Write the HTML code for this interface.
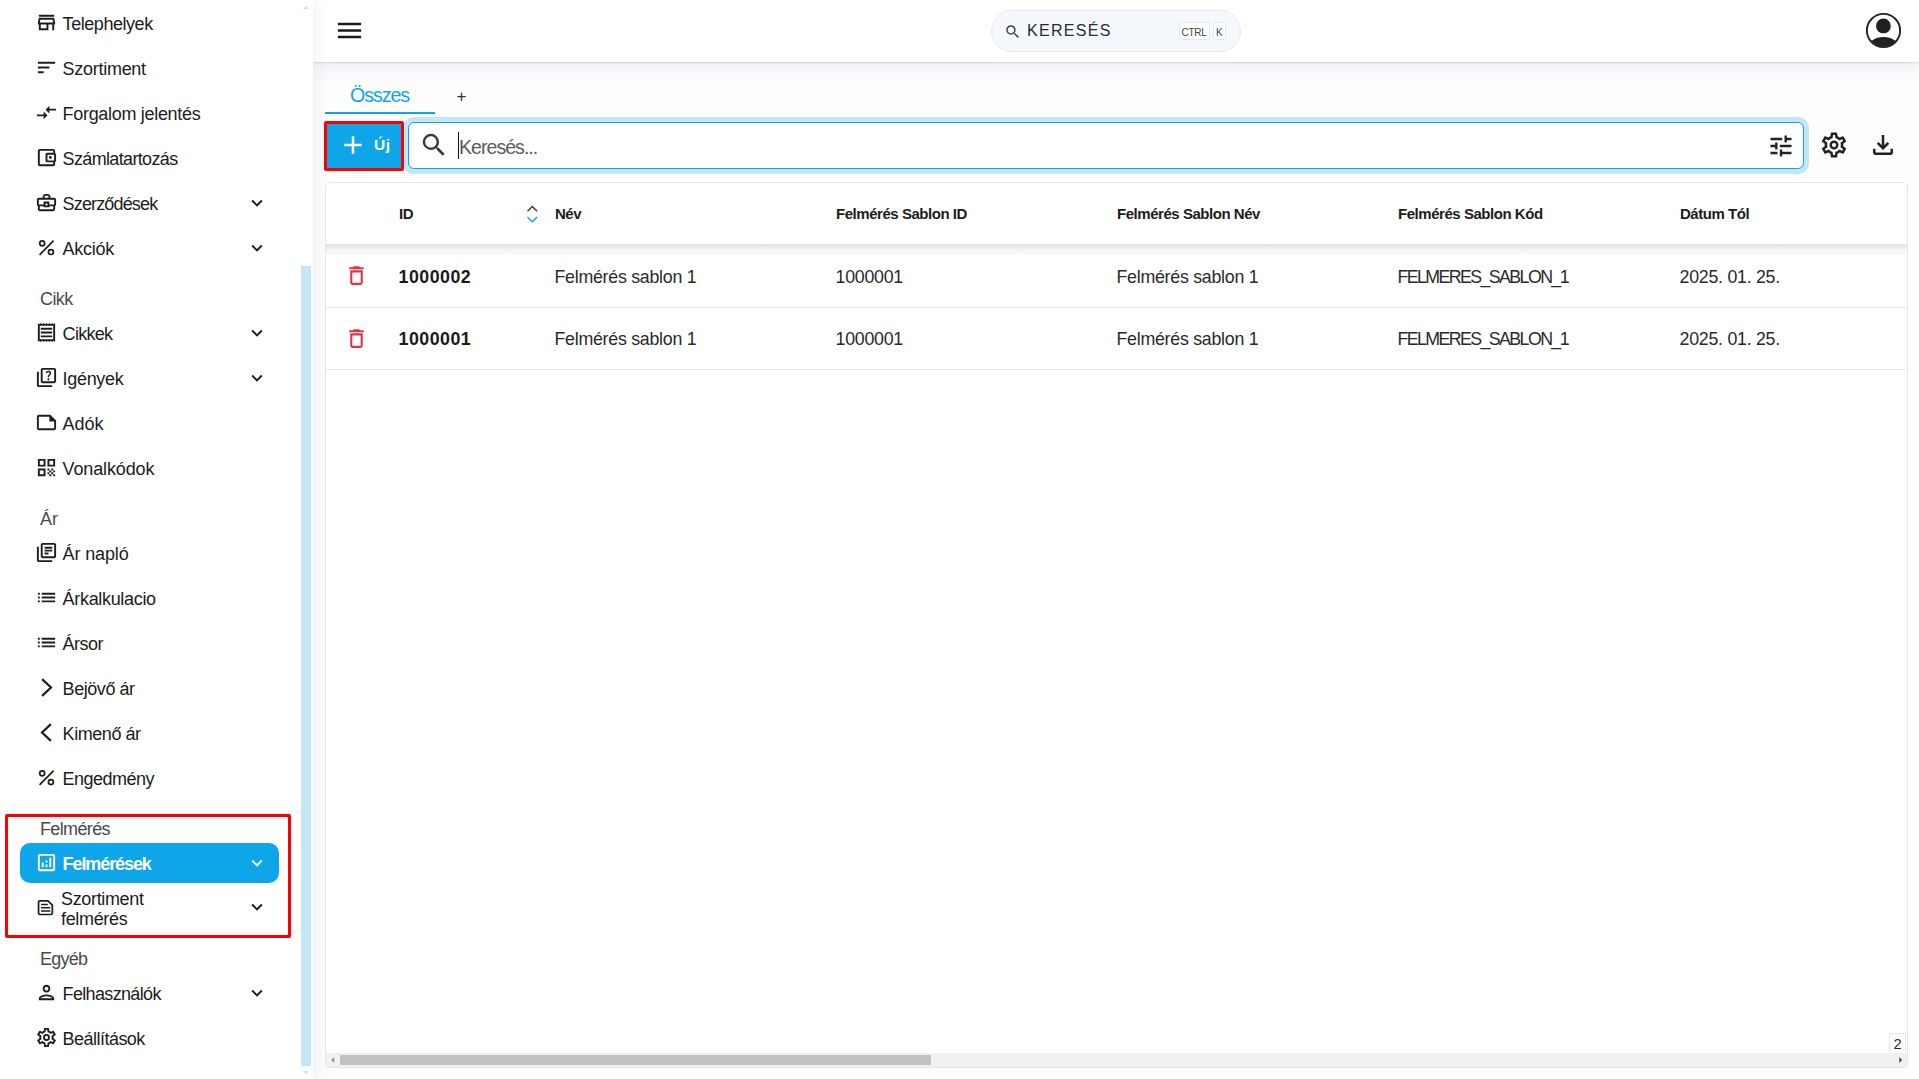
<!DOCTYPE html>
<html lang="hu">
<head>
<meta charset="utf-8">
<title>Felmérések</title>
<style>
*{box-sizing:border-box;margin:0;padding:0}
html,body{width:1919px;height:1079px;overflow:hidden;background:#fdfdfe;font-family:"Liberation Sans",sans-serif;color:#1f1f1f}
.abs{position:absolute}
svg{display:block;position:absolute;overflow:visible}
#side{position:absolute;left:0;top:0;width:313px;height:1079px;background:#fff;box-shadow:3px 0 14px rgba(70,90,140,.085);z-index:5;color:#1e1e1e}
.it{position:absolute;left:62.6px;font-size:18px;line-height:22px;white-space:nowrap;color:#1c1c1c}
.sec{position:absolute;left:40px;font-size:18px;line-height:22px;color:#4a4a4a}
#head{position:absolute;left:313px;top:0;width:1606px;height:62px;background:#fff;box-shadow:0 1px 1.5px rgba(90,105,130,.20),0 6px 16px rgba(90,110,150,.10);z-index:3}
#card{position:absolute;left:325px;top:182px;width:1583px;height:886px;background:#fff;border:1px solid #e3e6ea;border-radius:5px;overflow:hidden}
#thead{position:absolute;left:0;top:0;width:100%;height:61px;background:#fff;z-index:2}
#tshadow{position:absolute;left:0;top:61px;width:100%;height:13px;background:linear-gradient(to bottom,rgba(20,30,40,.125),rgba(20,30,40,.05) 45%,rgba(20,30,40,0));z-index:2}
.th{position:absolute;top:22px;font-size:15px;font-weight:bold;line-height:18px;color:#1c1c1c;white-space:nowrap;letter-spacing:-.46px}
.td{position:absolute;font-size:17.8px;margin-left:.5px;letter-spacing:-.26px;line-height:22px;color:#2a2a2a;white-space:nowrap}
.idc{font-weight:bold;color:#1a1a1a;letter-spacing:.5px}
.code{letter-spacing:-1.6px}
.rowline{position:absolute;left:0;width:100%;height:1px;background:#e4e6e9}
</style>
</head>
<body>

<!-- ============ SIDEBAR ============ -->
<div id="side">
  <div class="it" style="top:13px;letter-spacing:-0.45px">Telephelyek</div>
  <svg style="left:34.8px;top:10.8px" width="23" height="23" viewBox="0 0 24 24" fill="currentColor"><path d="M18.36 9L18.96 12H5.04L5.64 9H18.36M20 4H4V6H20V4M20 7H4L3 12V14H4V20H14V14H18V20H20V14H21V12L20 7M6 18V14H12V18H6Z"/></svg>
  <div class="it" style="top:58px;letter-spacing:-0.28px">Szortiment</div>
  <svg style="left:34.8px;top:55.8px" width="23" height="23" viewBox="0 0 24 24" fill="currentColor"><path d="M3,13H15V11H3M3,6V8H21V6M3,18H9V16H3V18Z"/></svg>
  <div class="it" style="top:103px;letter-spacing:-0.31px">Forgalom jelentés</div>
  <svg style="left:34.8px;top:100.8px" width="23" height="23" viewBox="0 0 24 24" fill="currentColor"><path d="M9.01 14H2v2h7.01v3L13 15l-3.99-4v3zm5.98-1v-3H22V8h-7.01V5L11 9l3.99 4z"/></svg>
  <div class="it" style="top:148px;letter-spacing:-0.65px">Számlatartozás</div>
  <svg style="left:34.8px;top:145.8px" width="23" height="23" viewBox="0 0 24 24" fill="currentColor"><path d="M5,3C3.89,3 3,3.9 3,5V19A2,2 0 0,0 5,21H19A2,2 0 0,0 21,19V16.72C21.59,16.37 22,15.74 22,15V9C22,8.26 21.59,7.63 21,7.28V5A2,2 0 0,0 19,3H5M5,5H19V7H13A2,2 0 0,0 11,9V15A2,2 0 0,0 13,17H19V19H5V5M13,9H20V15H13V9M16,10.5A1.5,1.5 0 0,0 14.5,12A1.5,1.5 0 0,0 16,13.5A1.5,1.5 0 0,0 17.5,12A1.5,1.5 0 0,0 16,10.5Z"/></svg>
  <div class="it" style="top:193px;letter-spacing:-0.85px">Szerződések</div>
  <svg style="left:34.8px;top:190.8px" width="23" height="23" viewBox="0 0 24 24" fill="currentColor"><path d="M20 7h-4V5l-2-2h-4L8 5v2H4c-1.1 0-2 .9-2 2v5c0 .75.4 1.38 1 1.730V19c0 1.110.89 2 2 2h14c1.110 0 2-.89 2-2v-3.280c.59-.35 1-.99 1-1.720V9c0-1.100-.9-2-2-2zM10 5h4v2h-4V5zM4 9h16v5h-5v-3H9v3H4V9zm9 6h-2v-2h2v2zm6 4H5v-3h4v1h6v-1h4v3z"/></svg>
  <svg style="left:245.9px;top:191.6px" width="22" height="22" viewBox="0 0 24 24" fill="currentColor"><path d="M7.41,8.58L12,13.17L16.59,8.58L18,10L12,16L6,10L7.41,8.58Z"/></svg>
  <div class="it" style="top:238px;letter-spacing:-0.25px">Akciók</div>
  <svg style="left:34.8px;top:235.8px" width="23" height="23" viewBox="0 0 24 24" fill="currentColor"><g fill="none" stroke="currentColor" stroke-width="1.8"><circle cx="7.5" cy="7.6" r="2.6"/><circle cx="16.6" cy="16.7" r="2.6"/><path d="M4.8 19.6L19.4 4.8"/></g></svg>
  <svg style="left:245.9px;top:236.6px" width="22" height="22" viewBox="0 0 24 24" fill="currentColor"><path d="M7.41,8.58L12,13.17L16.59,8.58L18,10L12,16L6,10L7.41,8.58Z"/></svg>
  <div class="sec" style="top:288px;letter-spacing:-0.58px">Cikk</div>
  <div class="it" style="top:323px;letter-spacing:-0.7px">Cikkek</div>
  <svg style="left:34.8px;top:320.8px" width="23" height="23" viewBox="0 0 24 24" fill="currentColor"><path d="M19.5 3.5L18 2l-1.5 1.5L15 2l-1.5 1.5L12 2l-1.5 1.5L9 2 7.5 3.5 6 2 4.5 3.5 3 2v20l1.5-1.5L6 22l1.5-1.5L9 22l1.5-1.5L12 22l1.5-1.5L15 22l1.5-1.5L18 22l1.5-1.5L21 22V2l-1.5 1.5zM19 19.090H5V4.910h14v14.180zM6 15h12v2H6zm0-4h12v2H6zm0-4h12v2H6z"/></svg>
  <svg style="left:245.9px;top:321.6px" width="22" height="22" viewBox="0 0 24 24" fill="currentColor"><path d="M7.41,8.58L12,13.17L16.59,8.58L18,10L12,16L6,10L7.41,8.58Z"/></svg>
  <div class="it" style="top:368px;letter-spacing:-0.33px">Igények</div>
  <svg style="left:34.8px;top:365.8px" width="23" height="23" viewBox="0 0 24 24" fill="currentColor"><path d="M4 6H2V20C2 21.1 2.9 22 4 22H18V20H4V6M20 2H8C6.9 2 6 2.9 6 4V16C6 17.1 6.9 18 8 18H20C21.1 18 22 17.1 22 16V4C22 2.9 21.1 2 20 2M20 16H8V4H20V16M13.51 10.16C13.92 9.43 14.69 9 15.14 8.36C15.62 7.69 15.35 6.42 14 6.42C13.12 6.42 12.68 7.09 12.5 7.65L11.13 7.08C11.51 5.96 12.52 5 14 5C15.23 5 16.08 5.56 16.5 6.26C16.87 6.86 17.08 7.97 16.5 8.82C15.87 9.75 15.27 10.03 14.94 10.63C14.81 10.87 14.76 11.03 14.76 11.81H13.24C13.24 11.4 13.18 10.73 13.51 10.16M12.95 13.95C12.95 13.36 13.42 12.91 14 12.91C14.59 12.91 15.04 13.36 15.04 13.95C15.04 14.53 14.6 15 14 15C13.42 15 12.95 14.53 12.95 13.95Z"/></svg>
  <svg style="left:245.9px;top:366.6px" width="22" height="22" viewBox="0 0 24 24" fill="currentColor"><path d="M7.41,8.58L12,13.17L16.59,8.58L18,10L12,16L6,10L7.41,8.58Z"/></svg>
  <div class="it" style="top:413px">Adók</div>
  <svg style="left:34.8px;top:410.8px" width="23" height="23" viewBox="0 0 24 24" fill="currentColor"><path d="M16 4H4c-1.1 0-2 .9-2 2v12.010c0 1.100.9 1.990 2 1.990h16c1.100 0 2-.9 2-2v-8l-6-6zM4 18.010V6h11v5h5v7.010H4z"/></svg>
  <div class="it" style="top:458px;letter-spacing:-0.14px">Vonalkódok</div>
  <svg style="left:34.8px;top:455.8px" width="23" height="23" viewBox="0 0 24 24" fill="currentColor"><path d="M3 11h8V3H3v8zm2-6h4v4H5V5zM3 21h8v-8H3v8zm2-6h4v4H5v-4zM13 3v8h8V3h-8zm6 6h-4V5h4v4zM19 19h2v2h-2zM13 13h2v2h-2zM15 15h2v2h-2zM13 17h2v2h-2zM15 19h2v2h-2zM17 17h2v2h-2zM17 13h2v2h-2zM19 15h2v2h-2z"/></svg>
  <div class="sec" style="top:508px">Ár</div>
  <div class="it" style="top:543px;letter-spacing:-0.14px">Ár napló</div>
  <svg style="left:34.8px;top:540.8px" width="23" height="23" viewBox="0 0 24 24" fill="currentColor"><path d="M4 6H2v14c0 1.100.9 2 2 2h14v-2H4V6zm16-4H8c-1.100 0-2 .9-2 2v12c0 1.100.9 2 2 2h12c1.100 0 2-.9 2-2V4c0-1.100-.9-2-2-2zm0 14H8V4h12v12zM10 9h8v2h-8zm0 3h4v2h-4zm0-6h8v2h-8z"/></svg>
  <div class="it" style="top:588px;letter-spacing:-0.32px">Árkalkulacio</div>
  <svg style="left:34.8px;top:585.8px" width="23" height="23" viewBox="0 0 24 24" fill="currentColor"><path d="M3 13h2v-2H3v2zm0 4h2v-2H3v2zm0-8h2V7H3v2zm4 4h14v-2H7v2zm0 4h14v-2H7v2zM7 7v2h14V7H7z"/></svg>
  <div class="it" style="top:633px;letter-spacing:-0.5px">Ársor</div>
  <svg style="left:34.8px;top:630.8px" width="23" height="23" viewBox="0 0 24 24" fill="currentColor"><path d="M3 13h2v-2H3v2zm0 4h2v-2H3v2zm0-8h2V7H3v2zm4 4h14v-2H7v2zm0 4h14v-2H7v2zM7 7v2h14V7H7z"/></svg>
  <div class="it" style="top:678px;letter-spacing:-0.44px">Bejövő ár</div>
  <svg style="left:34.8px;top:675.8px" width="23" height="23" viewBox="0 0 24 24" fill="currentColor"><path d="M7.400 3.300L16.700 12L7.400 20.700" fill="none" stroke="currentColor" stroke-width="2.300"/></svg>
  <div class="it" style="top:723px;letter-spacing:-0.44px">Kimenő ár</div>
  <svg style="left:34.8px;top:720.8px" width="23" height="23" viewBox="0 0 24 24" fill="currentColor"><path d="M16.600 3.300L7.300 12L16.600 20.700" fill="none" stroke="currentColor" stroke-width="2.300"/></svg>
  <div class="it" style="top:768px;letter-spacing:-0.53px">Engedmény</div>
  <svg style="left:34.8px;top:765.8px" width="23" height="23" viewBox="0 0 24 24" fill="currentColor"><g fill="none" stroke="currentColor" stroke-width="1.8"><circle cx="7.5" cy="7.6" r="2.6"/><circle cx="16.6" cy="16.7" r="2.6"/><path d="M4.8 19.6L19.4 4.8"/></g></svg>
  <div class="sec" style="top:818px;letter-spacing:-0.63px">Felmérés</div>
  <div class="abs" style="left:20px;top:843px;width:259px;height:40px;background:#0ea5e9;border-radius:10px"></div>
  <div class="it" style="top:853px;color:#fff;font-weight:bold;letter-spacing:-1.09px">Felmérések</div>
  <svg style="left:34.8px;top:850.8px;color:#fff" width="23" height="23" viewBox="0 0 24 24" fill="currentColor"><path d="M19 3H5c-1.100 0-2 .9-2 2v14c0 1.100.9 2 2 2h14c1.100 0 2-.9 2-2V5c0-1.100-.9-2-2-2zm0 16H5V5h14v14zM7 12h2v5H7zm8-5h2v10h-2zm-4 7h2v3h-2zm0-4h2v2h-2z"/></svg>
  <svg style="left:245.9px;top:851.6px;color:#fff" width="22" height="22" viewBox="0 0 24 24" fill="currentColor"><path d="M7.41,8.58L12,13.17L16.59,8.58L18,10L12,16L6,10L7.41,8.58Z"/></svg>
  <div class="it" style="top:890px;left:61px;line-height:19.5px;letter-spacing:-0.34px">Szortiment<br>felmérés</div>
  <svg style="left:34.8px;top:895.6px" width="23" height="23" viewBox="0 0 24 24" fill="currentColor"><g fill="none" stroke="currentColor" stroke-width="1.8"><path d="M5.200 5H13.600L18.100 9.500V17.800Q18.100 19.300 16.600 19.300H5.200Q3.700 19.300 3.700 17.800V6.500Q3.700 5 5.200 5Z" stroke-linejoin="round"/><path d="M6.300 8.800H13.400M6.300 12.200H16M6.300 15.600H16" stroke-width="1.600"/></g></svg>
  <svg style="left:245.9px;top:895.6px" width="22" height="22" viewBox="0 0 24 24" fill="currentColor"><path d="M7.41,8.58L12,13.17L16.59,8.58L18,10L12,16L6,10L7.41,8.58Z"/></svg>
  <div class="sec" style="top:948px;letter-spacing:-0.77px">Egyéb</div>
  <div class="it" style="top:983px;letter-spacing:-0.66px">Felhasználók</div>
  <svg style="left:34.8px;top:980.8px" width="23" height="23" viewBox="0 0 24 24" fill="currentColor"><path d="M12 6c1.100 0 2 .9 2 2s-.9 2-2 2-2-.9-2-2 .9-2 2-2m0 10c2.700 0 5.800 1.290 6 2H6c.23-.72 3.310-2 6-2m0-12C9.790 4 8 5.790 8 8s1.790 4 4 4 4-1.790 4-4-1.790-4-4-4zm0 10c-2.670 0-8 1.340-8 4v2h16v-2c0-2.660-5.330-4-8-4z"/></svg>
  <svg style="left:245.9px;top:981.6px" width="22" height="22" viewBox="0 0 24 24" fill="currentColor"><path d="M7.41,8.58L12,13.17L16.59,8.58L18,10L12,16L6,10L7.41,8.58Z"/></svg>
  <div class="it" style="top:1028px;letter-spacing:-0.53px">Beállítások</div>
  <svg style="left:34.8px;top:1025.8px" width="23" height="23" viewBox="0 0 24 24" fill="currentColor"><path d="M12,8.4A3.6,3.6 0 0,1 15.6,12A3.6,3.6 0 0,1 12,15.6A3.6,3.6 0 0,1 8.4,12A3.6,3.6 0 0,1 12,8.4M12,10.3A1.7,1.7 0 0,0 10.3,12A1.7,1.7 0 0,0 12,13.7A1.7,1.7 0 0,0 13.7,12A1.7,1.7 0 0,0 12,10.3M10,22C9.75,22 9.54,21.82 9.5,21.58L9.13,18.93C8.5,18.68 7.96,18.34 7.44,17.94L4.95,18.95C4.73,19.03 4.46,18.95 4.34,18.73L2.34,15.27C2.21,15.05 2.27,14.78 2.46,14.63L4.57,12.97L4.5,12L4.57,11L2.46,9.37C2.27,9.22 2.21,8.95 2.34,8.73L4.34,5.27C4.46,5.05 4.73,4.96 4.95,5.05L7.44,6.05C7.96,5.66 8.5,5.32 9.13,5.07L9.5,2.42C9.54,2.18 9.75,2 10,2H14C14.25,2 14.46,2.18 14.5,2.42L14.87,5.07C15.5,5.32 16.04,5.66 16.56,6.05L19.05,5.05C19.27,4.96 19.54,5.05 19.66,5.27L21.66,8.73C21.79,8.95 21.73,9.22 21.54,9.37L19.43,11L19.5,12L19.43,13L21.54,14.63C21.73,14.78 21.79,15.05 21.66,15.27L19.66,18.73C19.54,18.95 19.27,19.04 19.05,18.95L16.56,17.95C16.04,18.34 15.5,18.68 14.87,18.93L14.5,21.58C14.46,21.82 14.25,22 14,22H10M11.25,4L10.88,6.61C9.68,6.86 8.62,7.5 7.85,8.39L5.44,7.35L4.69,8.65L6.8,10.2C6.4,11.37 6.4,12.64 6.8,13.8L4.68,15.36L5.43,16.66L7.86,15.62C8.63,16.5 9.68,17.14 10.87,17.38L11.24,20H12.76L13.13,17.39C14.32,17.14 15.37,16.5 16.14,15.62L18.57,16.66L19.32,15.36L17.2,13.81C17.6,12.64 17.6,11.37 17.2,10.2L19.31,8.65L18.56,7.35L16.15,8.39C15.38,7.5 14.32,6.86 13.12,6.62L12.75,4H11.25Z"/></svg>
  <div class="abs" style="left:5px;top:814px;width:286px;height:124px;border:3px solid #f00;border-radius:2px"></div>
  <div class="abs" style="left:301px;top:266px;width:10px;height:800px;background:#c3e7f9"></div>
  <svg style="left:303px;top:6px" width="6" height="3" viewBox="0 0 8 4"><path d="M0 4L4 0L8 4Z" fill="#c3e7f9"/></svg>
  <svg style="left:303px;top:1071px" width="6" height="3" viewBox="0 0 8 4"><path d="M0 0L4 4L8 0Z" fill="#c3e7f9"/></svg>
</div>

<!-- ============ HEADER ============ -->
<div id="head">
  <svg style="left:20.5px;top:15px" width="31" height="31" viewBox="0 0 24 24"><path d="M3,6H21V8H3V6M3,11H21V13H3V11M3,16H21V18H3V16Z" fill="#1a1a1a"/></svg>
  <div class="abs" style="left:678px;top:10px;width:250px;height:42px;border-radius:21px;background:#f5f8fc;border:1px solid #e6ebf2"></div>
  <svg style="left:690.8px;top:23.100px" width="17.5" height="17.5" viewBox="0 0 24 24"><path d="M9.5,3A6.5,6.5 0 0,1 16,9.5C16,11.11 15.41,12.59 14.44,13.73L14.71,14H15.5L20.5,19L19,20.5L14,15.5V14.71L13.73,14.44C12.59,15.41 11.11,16 9.5,16A6.5,6.5 0 0,1 3,9.5A6.5,6.5 0 0,1 9.5,3M9.5,5C7,5 5,7 5,9.5C5,12 7,14 9.5,14C12,14 14,12 14,9.5C14,7 12,5 9.5,5Z" fill="#444"/></svg>
  <div class="abs" id="hsearch" style="left:714px;top:21px;font-size:16px;line-height:20px;letter-spacing:1.3px;color:#2b2b2b">KERESÉS</div>
  <div class="abs kbd" style="left:865.500px;top:21.500px;width:31px;height:18px;border:1px solid #e4e7ec;border-radius:3px;background:#fff;font-size:10px;line-height:19px;text-align:center;color:#444;letter-spacing:-.3px">CTRL</div>
  <div class="abs kbd" style="left:899.500px;top:21.500px;width:13.5px;height:18px;border:1px solid #e4e7ec;border-radius:3px;background:#fff;font-size:10px;line-height:19px;text-align:center;color:#444">K</div>
  <svg style="left:1552px;top:12px" width="37" height="37" viewBox="0 0 37 37">
    <defs><clipPath id="cp"><circle cx="18.500" cy="18.500" r="16"/></clipPath></defs>
    <circle cx="18.500" cy="18.500" r="16.600" fill="none" stroke="#212121" stroke-width="1.900"/>
    <circle cx="18.400" cy="13.900" r="7.400" fill="#212121"/>
    <ellipse cx="18.500" cy="36" rx="15.500" ry="11" fill="#212121" clip-path="url(#cp)"/>
  </svg>
</div>

<!-- ============ TABS ============ -->
<div class="abs" id="tab" style="left:350px;top:83px;font-size:19.6px;line-height:24px;color:#0ea5e9;letter-spacing:-1.05px">Összes</div>
<div class="abs" style="left:325px;top:112px;width:110px;height:2px;background:#0ea5e9"></div>
<div class="abs" id="plus" style="left:456.5px;top:86px;font-size:17px;line-height:22px;color:#333">+</div>

<!-- ============ TOOLBAR ============ -->
<div class="abs" style="left:324px;top:121px;width:80px;height:50px;background:#0ea5e9;border:3px solid #f00;border-radius:2px;z-index:1"></div>
<svg style="left:338px;top:130px;z-index:2" width="30" height="30" viewBox="0 0 24 24"><path d="M19,13H13V19H11V13H5V11H11V5H13V11H19V13Z" fill="#fff"/></svg>
<div class="abs" id="uj" style="left:374px;top:135px;font-size:15.5px;font-weight:bold;line-height:20px;color:#fff;letter-spacing:.5px;z-index:2">Új</div>

<div class="abs" style="left:408px;top:122px;width:1396px;height:47px;background:#fff;border:1px solid #0ea5e9;border-radius:6px;box-shadow:0 0 0 5px #c3e7f9"></div>
<svg style="left:418.5px;top:129.500px" width="30" height="30" viewBox="0 0 24 24"><path d="M9.5,3A6.5,6.5 0 0,1 16,9.5C16,11.11 15.41,12.59 14.44,13.73L14.71,14H15.5L20.5,19L19,20.5L14,15.5V14.71L13.73,14.44C12.59,15.41 11.11,16 9.5,16A6.5,6.5 0 0,1 3,9.5A6.5,6.5 0 0,1 9.5,3M9.5,5C7,5 5,7 5,9.5C5,12 7,14 9.5,14C12,14 14,12 14,9.5C14,7 12,5 9.5,5Z" fill="#3a3a3a"/></svg>
<div class="abs" style="left:458px;top:132px;width:1px;height:27px;background:#111"></div>
<div class="abs" id="ph" style="left:459px;top:135px;font-size:19.6px;line-height:24px;color:#5b5b5b;letter-spacing:-1px">Keresés...</div>
<svg style="left:1767px;top:132px" width="28" height="28" viewBox="0 0 24 24"><path d="M3 17v2h6v-2H3zM3 5v2h10V5H3zm10 16v-2h8v-2h-8v-2h-2v6h2zM7 9v2H3v2h4v2h2V9H7zm14 4v-2H11v2h10zm-6-4h2V7h4V5h-4V3h-2v6z" fill="#222"/></svg>
<svg style="left:1819px;top:130px" width="30" height="30" viewBox="0 0 24 24"><path d="M12,8.4A3.6,3.6 0 0,1 15.6,12A3.6,3.6 0 0,1 12,15.6A3.6,3.6 0 0,1 8.4,12A3.6,3.6 0 0,1 12,8.4M12,10.3A1.7,1.7 0 0,0 10.3,12A1.7,1.7 0 0,0 12,13.7A1.7,1.7 0 0,0 13.7,12A1.7,1.7 0 0,0 12,10.3M10,22C9.75,22 9.54,21.82 9.5,21.58L9.13,18.93C8.5,18.68 7.96,18.34 7.44,17.94L4.95,18.95C4.73,19.03 4.46,18.95 4.34,18.73L2.34,15.27C2.21,15.05 2.27,14.78 2.46,14.63L4.57,12.97L4.5,12L4.57,11L2.46,9.37C2.27,9.22 2.21,8.95 2.34,8.73L4.34,5.27C4.46,5.05 4.73,4.96 4.95,5.05L7.44,6.05C7.96,5.66 8.5,5.32 9.13,5.07L9.5,2.42C9.54,2.18 9.75,2 10,2H14C14.25,2 14.46,2.18 14.5,2.42L14.87,5.07C15.5,5.32 16.04,5.66 16.56,6.05L19.05,5.05C19.27,4.96 19.54,5.05 19.66,5.27L21.66,8.73C21.79,8.95 21.73,9.22 21.54,9.37L19.43,11L19.5,12L19.43,13L21.54,14.63C21.73,14.78 21.79,15.05 21.66,15.27L19.66,18.73C19.54,18.95 19.27,19.04 19.05,18.95L16.56,17.95C16.04,18.34 15.5,18.68 14.87,18.93L14.5,21.58C14.46,21.82 14.25,22 14,22H10M11.25,4L10.88,6.61C9.68,6.86 8.62,7.5 7.85,8.39L5.44,7.35L4.69,8.65L6.8,10.2C6.4,11.37 6.4,12.64 6.8,13.8L4.68,15.36L5.43,16.66L7.86,15.62C8.63,16.5 9.68,17.14 10.87,17.38L11.24,20H12.76L13.13,17.39C14.32,17.14 15.37,16.5 16.14,15.62L18.57,16.66L19.32,15.36L17.2,13.81C17.6,12.64 17.6,11.37 17.2,10.2L19.31,8.65L18.56,7.35L16.15,8.39C15.38,7.5 14.32,6.86 13.12,6.62L12.75,4H11.25Z" fill="#222"/></svg>
<svg style="left:1868px;top:130px" width="30" height="30" viewBox="0 0 24 24"><path d="M12 16L7 11l1.400-1.450L11 12.150V4h2v8.150l2.600-2.600L17 11l-5 5zM6 20q-.825 0-1.413-.587T4 18v-3h2v3h12v-3h2v3q0 .825-.587 1.413T18 20H6z" fill="#222"/></svg>

<!-- ============ TABLE ============ -->
<div id="card">
  <div id="thead">
    <div class="th" style="left:73px">ID</div><div class="th" style="left:229px">Név</div><div class="th" style="left:510px">Felmérés Sablon ID</div><div class="th" style="left:791px">Felmérés Sablon Név</div><div class="th" style="left:1072px">Felmérés Sablon Kód</div><div class="th" style="left:1354px">Dátum Tól</div>
    <svg style="left:0;top:0" width="300" height="60" viewBox="0 0 300 60"><path d="M201.500 28.300L206.300 23.500L211.100 28.300" fill="none" stroke="#3a3a3a" stroke-width="1.400"/><path d="M201.500 34L206.300 38.800L211.100 34" fill="none" stroke="#0ea5e9" stroke-width="1.400"/></svg>
  </div>
  <div id="tshadow"></div>
  <div class="td idc" style="left:72px;top:83px">1000002</div>
  <div class="td" style="left:228px;top:83px">Felmérés sablon 1</div>
  <div class="td" style="left:509px;top:83px">1000001</div>
  <div class="td" style="left:790px;top:83px">Felmérés sablon 1</div>
  <div class="td code" style="left:1071px;top:83px">FELMERES_SABLON_1</div>
  <div class="td" style="left:1353px;top:83px">2025. 01. 25.</div>
  <div class="rowline" style="top:124px"></div>
  <svg style="left:18px;top:79.9px;color:#dc3545" width="25" height="25" viewBox="0 0 24 24" fill="currentColor"><path d="M6,19A2,2 0 0,0 8,21H16A2,2 0 0,0 18,19V7H6V19M8,9H16V19H8V9M15.5,4L14.5,3H9.5L8.500,4H5V6H19V4H15.500Z"/></svg>
  <div class="td idc" style="left:72px;top:145px">1000001</div>
  <div class="td" style="left:228px;top:145px">Felmérés sablon 1</div>
  <div class="td" style="left:509px;top:145px">1000001</div>
  <div class="td" style="left:790px;top:145px">Felmérés sablon 1</div>
  <div class="td code" style="left:1071px;top:145px">FELMERES_SABLON_1</div>
  <div class="td" style="left:1353px;top:145px">2025. 01. 25.</div>
  <div class="rowline" style="top:186px"></div>
  <svg style="left:18px;top:142.8px;color:#dc3545" width="25" height="25" viewBox="0 0 24 24" fill="currentColor"><path d="M6,19A2,2 0 0,0 8,21H16A2,2 0 0,0 18,19V7H6V19M8,9H16V19H8V9M15.5,4L14.5,3H9.5L8.500,4H5V6H19V4H15.500Z"/></svg>
  <div class="abs" style="left:0;top:870px;width:100%;height:15px;background:#f1f1f1"></div>
  <div class="abs" style="left:14px;top:872px;width:591px;height:10px;background:#c1c1c1"></div>
  <svg style="left:4.800px;top:874px" width="3.5" height="6" viewBox="0 0 4 8"><path d="M4 0L0 4L4 8Z" fill="#8c8c8c"/></svg>
  <svg style="left:1573px;top:874px" width="3.5" height="6" viewBox="0 0 4 8"><path d="M0 0L4 4L0 8Z" fill="#505050"/></svg>
  <div class="abs" style="left:1563px;top:850px;width:17px;height:20px;border:1px solid #e6e8ec;border-bottom:none;background:#fff;font-size:14.5px;line-height:20px;text-align:center;color:#1f2a44">2</div>
</div>

</body>
</html>
